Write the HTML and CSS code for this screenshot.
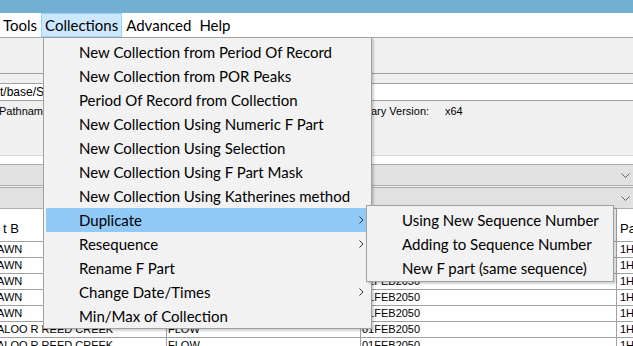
FILE: index.html
```html
<!DOCTYPE html>
<html>
<head>
<meta charset="utf-8">
<link rel="stylesheet" href="styles.css">
</head>
<body>
<div class="app">
  <div class="titlebar"></div>
  <div class="menubar">
    <span class="mi">Tools</span><span class="mi active">Collections</span><span class="mi">Advanced</span><span class="mi">Help</span>
  </div>
  <div class="toolbar"></div>
  <div class="pathrow"><div class="field">t/base/S</div></div>
  <div class="inforow">
    <span>Pathname</span><span>ary Version:</span><span>x64</span>
  </div>
  <div class="strip"></div>
  <div class="combo"><svg class="chev" width="9" height="5" viewBox="0 0 9 5"><path d="M0.5 0.5 L4.5 4.5 L8.5 0.5" fill="none" stroke="#606060" stroke-width="1"/></svg></div>
  <div class="combo second"><svg class="chev" width="9" height="5" viewBox="0 0 9 5"><path d="M0.5 0.5 L4.5 4.5 L8.5 0.5" fill="none" stroke="#606060" stroke-width="1"/></svg></div>
  <div class="table">
    <div class="row head"><div class="c c1">t B</div><div class="c c2"></div><div class="c c3"></div><div class="c c4">Pa</div></div>
    <div class="row"><div class="c c1">AWN</div><div class="c c2">FLOW</div><div class="c c3">01FEB2050</div><div class="c c4">1H</div></div>
    <div class="row"><div class="c c1">AWN</div><div class="c c2">FLOW</div><div class="c c3">01FEB2050</div><div class="c c4">1H</div></div>
    <div class="row"><div class="c c1">AWN</div><div class="c c2">FLOW</div><div class="c c3">01FEB2050</div><div class="c c4">1H</div></div>
    <div class="row"><div class="c c1">AWN</div><div class="c c2">FLOW</div><div class="c c3">01FEB2050</div><div class="c c4">1H</div></div>
    <div class="row"><div class="c c1">AWN</div><div class="c c2">FLOW</div><div class="c c3">01FEB2050</div><div class="c c4">1H</div></div>
    <div class="row"><div class="c c1">ALOO R REED CREEK</div><div class="c c2">FLOW</div><div class="c c3">01FEB2050</div><div class="c c4">1H</div></div>
    <div class="row"><div class="c c1">ALOO R REED CREEK</div><div class="c c2">FLOW</div><div class="c c3">01FEB2050</div><div class="c c4">1H</div></div>
  </div>

  <div class="menu">
    <div class="item">New Collection from Period Of Record</div>
    <div class="item">New Collection from POR Peaks</div>
    <div class="item">Period Of Record from Collection</div>
    <div class="item">New Collection Using Numeric F Part</div>
    <div class="item">New Collection Using Selection</div>
    <div class="item">New Collection Using F Part Mask</div>
    <div class="item">New Collection Using Katherines method</div>
    <div class="item sel sub">Duplicate<svg class="arrow" width="5" height="8" viewBox="0 0 5 8"><path d="M0.5 0.5 L4 4 L0.5 7.5" fill="none" stroke="#333" stroke-width="1"/></svg></div>
    <div class="item sub">Resequence<svg class="arrow" width="5" height="8" viewBox="0 0 5 8"><path d="M0.5 0.5 L4 4 L0.5 7.5" fill="none" stroke="#333" stroke-width="1"/></svg></div>
    <div class="item">Rename F Part</div>
    <div class="item sub">Change Date/Times<svg class="arrow" width="5" height="8" viewBox="0 0 5 8"><path d="M0.5 0.5 L4 4 L0.5 7.5" fill="none" stroke="#333" stroke-width="1"/></svg></div>
    <div class="item">Min/Max of Collection</div>
  </div>

  <div class="submenu">
    <div class="item">Using New Sequence Number</div>
    <div class="item">Adding to Sequence Number</div>
    <div class="item">New F part (same sequence)</div>
  </div>
</div>
</body>
</html>
```
FILE: styles.css
```css
* { box-sizing: border-box; }
html, body { margin: 0; padding: 0; }
body {
  width: 633px;
  height: 346px;
  overflow: hidden;
  background: #f0f0f0;
  font-family: "Lato", "Noto Sans", sans-serif;
}
.app {
  position: relative;
  width: 633px;
  height: 346px;
  overflow: hidden;
  background: #f0f0f0;
}
.titlebar {
  height: 13px;
  background: #72afd3;
}
.menubar {
  height: 25px;
  background: #ffffff;
  border-bottom: 1px solid #a7a7a7;
  display: flex;
  align-items: stretch;
  margin-left: -1px;
  font-size: 15px;
  color: #000;
}
.mi {
  display: flex;
  align-items: center;
  padding: 0 3px;
  border: 1px solid transparent;
  height: 24px;
}
.mi + .mi { margin-left: 0; }
.mi.active {
  background: #cce8ff;
  border-color: #99d1ff;
}
.toolbar {
  height: 36px;
  border-bottom: 1px solid #a0a0a0;
}
.pathrow {
  padding-top: 9px;
}
.field {
  height: 18px;
  background: #fff;
  border-top: 1px solid #a0a0a0;
  border-bottom: 1px solid #a0a0a0;
  font-family: "Liberation Sans", Arial, sans-serif;
  font-size: 12px;
  line-height: 16px;
  white-space: nowrap;
}
.inforow {
  height: 54px;
  display: grid;
  grid-template-columns: 371px 74px 1fr;
  padding-top: 3px;
  font-family: "Liberation Sans", Arial, sans-serif;
  font-size: 11px;
  line-height: 14px;
  color: #000;
}
.inforow span:first-child { margin-left: -1px; }
.strip {
  height: 9px;
  border-top: 1px solid #d9d9d9;
  background: #fff;
}
.combo {
  height: 22px;
  background: #e1e1e1;
  border-top: 1px solid #adadad;
  border-bottom: 1px solid #adadad;
  display: flex;
  justify-content: flex-end;
  align-items: center;
  padding-right: 3px;
}
.combo.second {
  margin-top: 1px;
}
.chev { display: block; }
.table {
  background: #fff;
  font-family: "Liberation Sans", Arial, sans-serif;
  font-size: 11px;
  color: #000;
}
.row {
  display: grid;
  grid-template-columns: 167px 194px 256px 1fr;
  height: 16px;
  border-bottom: 1px solid #a0a0a0;
}
.row.head {
  height: 33px;
  font-size: 13px;
}
.c {
  white-space: nowrap;
  overflow: hidden;
  border-right: 1px solid #a0a0a0;
  padding-left: 1px;
  line-height: 15px;
}
.c1 { text-indent: -3px; padding-left: 0; }
.c4 { border-right: none; padding-left: 3px; }
.row.head .c { padding-top: 10px; line-height: 20px; }
.row.head .c1 { padding-left: 3px; text-indent: 0; border-right: none; }
.row.head .c2 { border-right: none; }
.row.head .c3 { border-right: 1px solid #a0a0a0; }

.menu {
  position: absolute;
  left: 43px;
  top: 37px;
  width: 329px;
  height: 292px;
  background: #f2f2f2;
  border: 1px solid #a0a0a0;
  padding: 2px;
  box-shadow: 2px 2px 2px rgba(0,0,0,0.18);
  font-size: 15px;
  color: #000;
}
.item {
  height: 24px;
  line-height: 24px;
  padding-left: 33px;
  white-space: nowrap;
  position: relative;
}
.item.sel {
  background: #91c9f7;
}
.arrow {
  position: absolute;
  right: 5px;
  top: 8px;
}
.submenu {
  position: absolute;
  left: 366px;
  top: 205px;
  width: 248px;
  height: 77px;
  background: #f2f2f2;
  border: 1px solid #a0a0a0;
  padding: 2px;
  box-shadow: 2px 2px 2px rgba(0,0,0,0.18);
  font-size: 15px;
  color: #000;
}
```
